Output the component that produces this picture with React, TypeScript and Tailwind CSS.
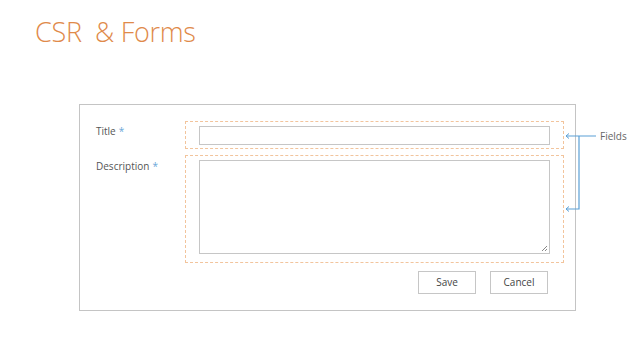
import React from "react";

export default function App() {
  return (
    <div className="relative w-[638px] h-[359px] bg-white overflow-hidden" style={{ fontFamily: '"Open Sans", "Liberation Sans", sans-serif' }}>
      <h1 className="pt-[15px] pl-[35px] text-[27px] leading-[34px] font-light tracking-[-0.3px] text-[#e08a4a] whitespace-pre">
        CSR  &amp; Forms
      </h1>
      <div className="ml-[79px] mt-[55px] w-[497px] h-[207px] border border-[#c4c4c4] flex flex-col">
        <div className="flex pt-[16px]">
          <div className="w-[105px] shrink-0 pl-[16px] text-[10px] text-[#555]">
            <div className="h-[20px] flex items-center">
              Title<span className="ml-[3px] text-[#6aa6d8]">*</span>
            </div>
            <div className="mt-[15px] h-[20px] flex items-center">
              Description<span className="ml-[3px] text-[#6aa6d8]">*</span>
            </div>
          </div>
          <div className="w-[379px] flex flex-col gap-[6px]">
            <div className="h-[28px] border border-dashed border-[#f2c49c] pl-[13px] pr-[13px] pt-[4px]">
              <div className="h-[19px] border border-[#c6c6c6] bg-white" />
            </div>
            <div className="h-[108px] border border-dashed border-[#f2c49c] pl-[13px] pr-[13px] pt-[4px]">
              <div className="relative h-[94px] border border-[#c6c6c6] bg-white">
                <svg className="absolute right-[1px] bottom-[1px]" width="8" height="8" viewBox="0 0 8 8">
                  <path d="M7 2 L2 7 M7 5 L5 7" stroke="#888" strokeWidth="1" fill="none" />
                </svg>
              </div>
            </div>
          </div>
        </div>
        <div className="flex justify-end gap-[14px] pr-[27px] mt-[8px]">
          <button className="w-[58px] h-[23px] border border-[#c6c6c6] bg-white text-[10px] text-[#444]">Save</button>
          <button className="w-[58px] h-[23px] border border-[#c6c6c6] bg-white text-[10px] text-[#444]">Cancel</button>
        </div>
      </div>
      <svg className="absolute left-[560px] top-[130px]" width="40" height="85" viewBox="0 0 40 85">
        <path d="M6 6 H36 M19 6 V79 H6" stroke="#5aa0d6" strokeWidth="1.2" fill="none" />
        <path d="M9 3.5 L6 6 L9 8.5" stroke="#5aa0d6" strokeWidth="1" fill="none" />
        <path d="M9 76.5 L6 79 L9 81.5" stroke="#5aa0d6" strokeWidth="1" fill="none" />
      </svg>
      <div className="absolute left-[600px] top-[128px] text-[10px] leading-[16px] text-[#666]">Fields</div>
    </div>
  );
}
